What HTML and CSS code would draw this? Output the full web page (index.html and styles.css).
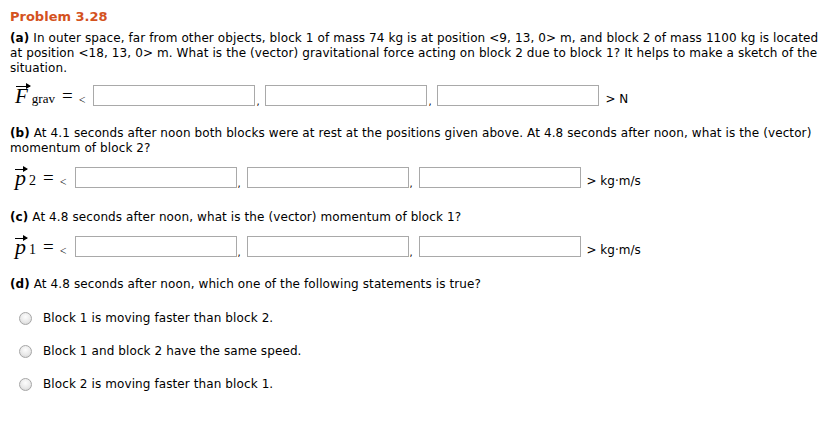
FILE: index.html
```html
<!DOCTYPE html>
<html>
<head>
<meta charset="utf-8">
<link rel="stylesheet" href="styles.css">
</head>
<body>
<div class="page">
  <div class="title">Problem 3.28</div>
  <p class="q"><b>(a)</b> In outer space, far from other objects, block 1 of mass 74 kg is at position &lt;9, 13, 0&gt; m, and block 2 of mass 1100 kg is located at position &lt;18, 13, 0&gt; m. What is the (vector) gravitational force acting on block 2 due to block 1? It helps to make a sketch of the situation.</p>
  <div class="row row-f">
    <span class="math"><span class="vec">F</span><span class="sub">grav</span><span class="eq">=</span><span class="lt">&lt;</span></span>
    <span class="box"></span><span class="comma">,</span>
    <span class="box"></span><span class="comma">,</span>
    <span class="box"></span>
    <span class="unit">&gt; N</span>
  </div>
  <p class="q"><b>(b)</b> At 4.1 seconds after noon both blocks were at rest at the positions given above. At 4.8 seconds after noon, what is the (vector) momentum of block 2?</p>
  <div class="row row-p">
    <span class="math"><span class="vec vp">p</span><span class="sub sn">2</span><span class="eq">=</span><span class="lt">&lt;</span></span>
    <span class="box"></span><span class="comma">,</span>
    <span class="box"></span><span class="comma">,</span>
    <span class="box"></span>
    <span class="unit">&gt; kg·m/s</span>
  </div>
  <p class="q"><b>(c)</b> At 4.8 seconds after noon, what is the (vector) momentum of block 1?</p>
  <div class="row row-p row-last">
    <span class="math"><span class="vec vp">p</span><span class="sub sn">1</span><span class="eq">=</span><span class="lt">&lt;</span></span>
    <span class="box"></span><span class="comma">,</span>
    <span class="box"></span><span class="comma">,</span>
    <span class="box"></span>
    <span class="unit">&gt; kg·m/s</span>
  </div>
  <p class="q"><b>(d)</b> At 4.8 seconds after noon, which one of the following statements is true?</p>
  <ul class="opts">
    <li><span class="radio"></span>Block 1 is moving faster than block 2.</li>
    <li><span class="radio"></span>Block 1 and block 2 have the same speed.</li>
    <li><span class="radio"></span>Block 2 is moving faster than block 1.</li>
  </ul>
</div>
</body>
</html>
```
FILE: styles.css
```css
html, body { margin: 0; padding: 0; background: #fff; }
.page {
  width: 815px;
  padding: 9px 10px 0 10px;
  font-family: "DejaVu Sans", Verdana, sans-serif;
  font-size: 12px;
  letter-spacing: 0.1px;
  line-height: 15px;
  color: #000;
}
.title {
  color: #d4521e;
  font-weight: bold;
  font-size: 13px;
  line-height: 16px;
  letter-spacing: 0;
}
.q { margin: 6px 0 0 0; }
.q b { font-weight: bold; }
.row {
  display: flex;
  align-items: flex-end;
  height: 21px;
  margin: 9px 0 20px 0;
  letter-spacing: 0;
}
.row-p { margin-top: 11px; margin-bottom: 22px; }
.row-p.row-last { margin-bottom: 20px; }
.math {
  display: flex;
  align-items: flex-end;
  font-family: "Liberation Serif", "Times New Roman", serif;
  padding-left: 5px;
}
.vec {
  position: relative;
  font-style: italic;
  font-size: 21px;
  line-height: 20px;
}
.vec::before {
  content: "";
  position: absolute;
  left: 1px; right: -2px; top: 0px;
  height: 1px;
  background: #000;
}
.vec::after {
  content: "";
  position: absolute;
  right: -3px; top: -3px;
  border-left: 5px solid #000;
  border-top: 3.5px solid transparent;
  border-bottom: 3.5px solid transparent;
}
.vp { font-size: 22px; }
.vp::before { left: 0px; right: -1px; top: 1px; }
.vp::after { right: -2px; top: -2px; }
.sub { font-size: 13px; line-height: 15px; margin-left: 4px; }
.sn { margin-left: 3px; font-size: 14px; }
.eq { font-size: 19px; line-height: 20px; margin: 0 6px 0 7px; }
.lt { font-size: 12px; line-height: 12px; margin-right: 8px; }
.box {
  width: 160px;
  height: 19px;
  border: 1px solid #a9a9a9;
  box-sizing: content-box;
}
.comma { width: 9px; font-size: 10px; line-height: 9px; padding-left: 1px; }
.unit { margin-left: 6px; line-height: 13px; font-size: 12px; }
.opts { list-style: none; margin: 10px 0 0 0; padding: 0; }
.opts li {
  display: flex;
  align-items: center;
  height: 33px;
}
.radio {
  width: 11px; height: 11px;
  border-radius: 50%;
  border: 1px solid #a6a6a6;
  background: radial-gradient(circle at 50% 35%, #fdfdfd 0%, #e9e9e9 55%, #cfcfcf 100%);
  margin: 0 11px 0 9px;
}
```
